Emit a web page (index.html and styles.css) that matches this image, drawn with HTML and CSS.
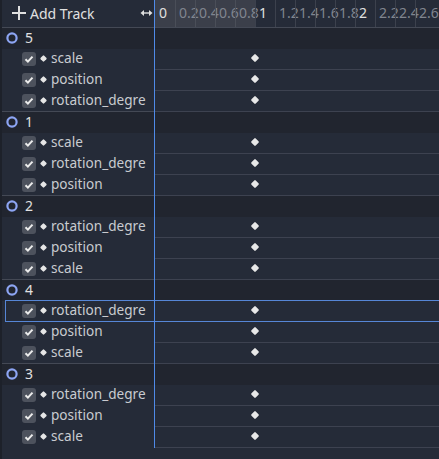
FILE: index.html
```html
<!DOCTYPE html>
<html>
<head>
<meta charset="utf-8">
<link rel="stylesheet" href="styles.css">
</head>
<body>
<div class="panel">
  <div class="header">
    <div class="add">
      <svg class="plus" width="16" height="16" viewBox="0 0 16 16"><path d="M7 1v6H1v2h6v6h2V9h6V7H9V1z" fill="#e0e0e0"/></svg>
      <span class="add-label">Add Track</span>
      <svg class="hsize" width="13" height="8" viewBox="0 0 13 8"><path d="M3 4h7" stroke="#e0e0e0" stroke-width="1.4"/><path d="M0.5 4L4 1v6z" fill="#e0e0e0"/><path d="M12.5 4L9 1v6z" fill="#e0e0e0"/></svg>
    </div>
    <div class="ruler">
      <div class="seg first"><span class="major">0</span></div>
      <div class="seg len"><span>0.2</span></div>
      <div class="seg len"><span>0.4</span></div>
      <div class="seg len"><span>0.6</span></div>
      <div class="seg len"><span>0.8</span></div>
      <div class="seg"><span class="major">1</span></div>
      <div class="seg"><span>1.2</span></div>
      <div class="seg"><span>1.4</span></div>
      <div class="seg"><span>1.6</span></div>
      <div class="seg"><span>1.8</span></div>
      <div class="seg"><span class="major">2</span></div>
      <div class="seg"><span>2.2</span></div>
      <div class="seg"><span>2.4</span></div>
      <div class="seg"><span>2.6</span></div>
    </div>
  </div>

  <div class="group">
    <div class="group-head"><svg class="ring" width="16" height="16" viewBox="0 0 16 16"><circle cx="8" cy="8" r="4.6" fill="none" stroke="#8da5f3" stroke-width="2.2"/></svg><span>5</span></div>
    <div class="track"><div class="name"><span class="check"><svg width="14" height="14" viewBox="0 0 14 14"><path d="M3.5 7.2l2.4 2.4 4.6-5" fill="none" stroke="#ececec" stroke-width="2"/></svg></span><span class="dot"></span><span class="label">scale</span></div><div class="lane"><span class="key" style="--t:1"></span></div></div>
    <div class="track"><div class="name"><span class="check"><svg width="14" height="14" viewBox="0 0 14 14"><path d="M3.5 7.2l2.4 2.4 4.6-5" fill="none" stroke="#ececec" stroke-width="2"/></svg></span><span class="dot"></span><span class="label">position</span></div><div class="lane"><span class="key" style="--t:1"></span></div></div>
    <div class="track"><div class="name"><span class="check"><svg width="14" height="14" viewBox="0 0 14 14"><path d="M3.5 7.2l2.4 2.4 4.6-5" fill="none" stroke="#ececec" stroke-width="2"/></svg></span><span class="dot"></span><span class="label">rotation_degre</span></div><div class="lane"><span class="key" style="--t:1"></span></div></div>
  </div>

  <div class="group">
    <div class="group-head"><svg class="ring" width="16" height="16" viewBox="0 0 16 16"><circle cx="8" cy="8" r="4.6" fill="none" stroke="#8da5f3" stroke-width="2.2"/></svg><span>1</span></div>
    <div class="track"><div class="name"><span class="check"><svg width="14" height="14" viewBox="0 0 14 14"><path d="M3.5 7.2l2.4 2.4 4.6-5" fill="none" stroke="#ececec" stroke-width="2"/></svg></span><span class="dot"></span><span class="label">scale</span></div><div class="lane"><span class="key" style="--t:1"></span></div></div>
    <div class="track"><div class="name"><span class="check"><svg width="14" height="14" viewBox="0 0 14 14"><path d="M3.5 7.2l2.4 2.4 4.6-5" fill="none" stroke="#ececec" stroke-width="2"/></svg></span><span class="dot"></span><span class="label">rotation_degre</span></div><div class="lane"><span class="key" style="--t:1"></span></div></div>
    <div class="track"><div class="name"><span class="check"><svg width="14" height="14" viewBox="0 0 14 14"><path d="M3.5 7.2l2.4 2.4 4.6-5" fill="none" stroke="#ececec" stroke-width="2"/></svg></span><span class="dot"></span><span class="label">position</span></div><div class="lane"><span class="key" style="--t:1"></span></div></div>
  </div>

  <div class="group">
    <div class="group-head"><svg class="ring" width="16" height="16" viewBox="0 0 16 16"><circle cx="8" cy="8" r="4.6" fill="none" stroke="#8da5f3" stroke-width="2.2"/></svg><span>2</span></div>
    <div class="track"><div class="name"><span class="check"><svg width="14" height="14" viewBox="0 0 14 14"><path d="M3.5 7.2l2.4 2.4 4.6-5" fill="none" stroke="#ececec" stroke-width="2"/></svg></span><span class="dot"></span><span class="label">rotation_degre</span></div><div class="lane"><span class="key" style="--t:1"></span></div></div>
    <div class="track"><div class="name"><span class="check"><svg width="14" height="14" viewBox="0 0 14 14"><path d="M3.5 7.2l2.4 2.4 4.6-5" fill="none" stroke="#ececec" stroke-width="2"/></svg></span><span class="dot"></span><span class="label">position</span></div><div class="lane"><span class="key" style="--t:1"></span></div></div>
    <div class="track"><div class="name"><span class="check"><svg width="14" height="14" viewBox="0 0 14 14"><path d="M3.5 7.2l2.4 2.4 4.6-5" fill="none" stroke="#ececec" stroke-width="2"/></svg></span><span class="dot"></span><span class="label">scale</span></div><div class="lane"><span class="key" style="--t:1"></span></div></div>
  </div>

  <div class="group">
    <div class="group-head"><svg class="ring" width="16" height="16" viewBox="0 0 16 16"><circle cx="8" cy="8" r="4.6" fill="none" stroke="#8da5f3" stroke-width="2.2"/></svg><span>4</span></div>
    <div class="track selected"><div class="name"><span class="check"><svg width="14" height="14" viewBox="0 0 14 14"><path d="M3.5 7.2l2.4 2.4 4.6-5" fill="none" stroke="#ececec" stroke-width="2"/></svg></span><span class="dot"></span><span class="label">rotation_degre</span></div><div class="lane"><span class="key" style="--t:1"></span></div></div>
    <div class="track"><div class="name"><span class="check"><svg width="14" height="14" viewBox="0 0 14 14"><path d="M3.5 7.2l2.4 2.4 4.6-5" fill="none" stroke="#ececec" stroke-width="2"/></svg></span><span class="dot"></span><span class="label">position</span></div><div class="lane"><span class="key" style="--t:1"></span></div></div>
    <div class="track"><div class="name"><span class="check"><svg width="14" height="14" viewBox="0 0 14 14"><path d="M3.5 7.2l2.4 2.4 4.6-5" fill="none" stroke="#ececec" stroke-width="2"/></svg></span><span class="dot"></span><span class="label">scale</span></div><div class="lane"><span class="key" style="--t:1"></span></div></div>
  </div>

  <div class="group">
    <div class="group-head"><svg class="ring" width="16" height="16" viewBox="0 0 16 16"><circle cx="8" cy="8" r="4.6" fill="none" stroke="#8da5f3" stroke-width="2.2"/></svg><span>3</span></div>
    <div class="track"><div class="name"><span class="check"><svg width="14" height="14" viewBox="0 0 14 14"><path d="M3.5 7.2l2.4 2.4 4.6-5" fill="none" stroke="#ececec" stroke-width="2"/></svg></span><span class="dot"></span><span class="label">rotation_degre</span></div><div class="lane"><span class="key" style="--t:1"></span></div></div>
    <div class="track"><div class="name"><span class="check"><svg width="14" height="14" viewBox="0 0 14 14"><path d="M3.5 7.2l2.4 2.4 4.6-5" fill="none" stroke="#ececec" stroke-width="2"/></svg></span><span class="dot"></span><span class="label">position</span></div><div class="lane"><span class="key" style="--t:1"></span></div></div>
    <div class="track"><div class="name"><span class="check"><svg width="14" height="14" viewBox="0 0 14 14"><path d="M3.5 7.2l2.4 2.4 4.6-5" fill="none" stroke="#ececec" stroke-width="2"/></svg></span><span class="dot"></span><span class="label">scale</span></div><div class="lane"><span class="key" style="--t:1"></span></div></div>
  </div>

  <div class="playhead"></div>
</div>
</body>
</html>
```

FILE: styles.css
```css
html, body {
  margin: 0;
  padding: 0;
  background: #252b38;
  overflow: hidden;
}

.panel {
  position: relative;
  width: 439px;
  height: 459px;
  box-sizing: border-box;
  border-left: 2px solid #1d212a;
  font-family: "Noto Sans", "DejaVu Sans", sans-serif;
  font-size: 14px;
  color: #cdcfd3;
}

/* header */
.header {
  position: relative;
  display: flex;
  height: 28px;
  box-sizing: border-box;
}
.header::after {
  content: "";
  position: absolute;
  left: 3px;
  right: 0;
  bottom: 0;
  height: 1px;
  background: #444955;
}
.add {
  width: 153px;
  flex: none;
  display: flex;
  align-items: center;
  padding-left: 9px;
  padding-bottom: 2px;
  box-sizing: border-box;
}
.plus { flex: none; }
.add-label {
  margin-left: 3px;
  color: #e0e0e0;
  white-space: nowrap;
}
.hsize {
  margin-left: auto;
  margin-right: 2px;
  flex: none;
}

.ruler {
  flex: 1;
  display: flex;
  height: 27px;
  overflow: hidden;
  background: linear-gradient(to right, #3b3f4a 0, #3b3f4a 100px, transparent 100px);
}
.seg {
  flex: none;
  width: 20px;
  height: 27px;
  box-sizing: border-box;
  border-left: 1px solid #3c414d;
  padding-left: 3px;
  line-height: 25px;
  white-space: nowrap;
  color: #80858f;
}
.seg.len {
  border-left-color: #4a4e58;
}
.seg.first {
  border-left-color: transparent;
}
.seg .major {
  color: #e0e0e0;
}

/* groups */
.group-head {
  display: flex;
  align-items: center;
  height: 22px;
  margin-top: -1px;
  box-sizing: border-box;
  border-top: 1px solid #444955;
  background: #21252f;
  padding-left: 2px;
  padding-bottom: 2px;
  color: #e0e0e0;
}
.ring {
  flex: none;
  margin-top: 1px;
}
.group-head span {
  margin-left: 5px;
}

.track {
  position: relative;
  display: flex;
  height: 21px;
}
.name {
  width: 152px;
  flex: none;
  display: flex;
  align-items: center;
  padding-left: 20px;
  padding-bottom: 2px;
  box-sizing: border-box;
  overflow: hidden;
  white-space: nowrap;
}
.check {
  flex: none;
  width: 14px;
  height: 14px;
  border-radius: 3px;
  background: #4d525d;
  display: flex;
}
.dot {
  flex: none;
  width: 5px;
  height: 5px;
  margin-left: 5px;
  margin-right: 5px;
  background: #e6e6e6;
  border-radius: 1px;
  transform: rotate(45deg);
}
.label {
  color: #c9cbd0;
  font-size: 13.6px;
  margin-top: -2px;
}
.lane {
  position: relative;
  flex: 1;
  height: 21px;
  box-sizing: border-box;
  border-bottom: 1px solid #3d4250;
}
.key {
  position: absolute;
  top: 6px;
  left: calc(var(--t) * 100px - 2px);
  width: 6px;
  height: 6px;
  background: #e8e8e8;
  border-radius: 1px;
  transform: rotate(45deg);
}

.track.selected::after {
  content: "";
  position: absolute;
  left: 3px;
  right: -2px;
  top: -1px;
  bottom: 0;
  border: 1px solid #5686d6;
  pointer-events: none;
}

.playhead {
  position: absolute;
  left: 152px;
  top: 0;
  width: 1px;
  height: 448px;
  background: #4f8ae8;
}
```
